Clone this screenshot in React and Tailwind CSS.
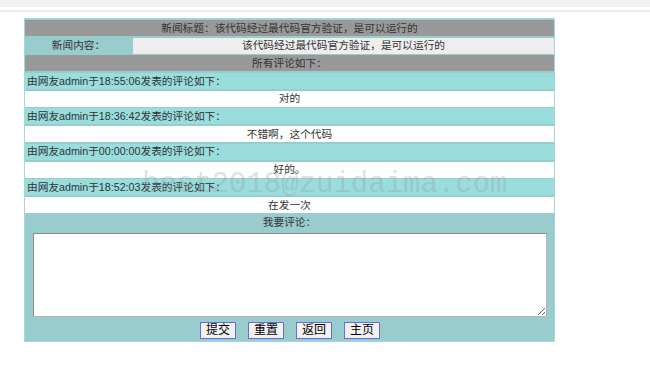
export default function App() {
  const font = { fontFamily: '"Liberation Sans", "Noto Sans CJK SC", sans-serif' };
  const comments = [
    { t: "18:55:06", c: "对的" },
    { t: "18:36:42", c: "不错啊，这个代码" },
    { t: "00:00:00", c: "好的。" },
    { t: "18:52:03", c: "在发一次" },
  ];
  return (
    <div className="relative w-[650px] h-[384px] bg-white overflow-hidden text-[10.7px] text-[#333]" style={font}>
      <div className="h-[7px] bg-[#f1f1f3]" />
      <div className="h-[3px] bg-white" />
      <div className="h-[2px] bg-[#ededed]" />
      <div className="ml-[24px] mt-[6px] w-[531px] border border-[#a3d8d8] bg-[#99cccc] pt-[1px] pb-[2px] flex flex-col">
        <div className="flex flex-col gap-[1.7px]">
          <div className="h-[16px] bg-[#999999] flex items-center justify-center leading-none">
            新闻标题：该代码经过最代码官方验证，是可以运行的
          </div>
          <div className="h-[16px] flex">
            <div className="w-[107px] flex items-center justify-center leading-none">新闻内容：</div>
            <div className="flex-1 ml-[1px] bg-[#eeeeee] flex items-center justify-center leading-none">
              该代码经过最代码官方验证，是可以运行的
            </div>
          </div>
          <div className="h-[16px] bg-[#999999] flex items-center justify-center leading-none">所有评论如下：</div>
          {comments.map((m) => (
            <div key={m.t} className="contents">
              <div className="h-[16px] bg-[#99dddd] flex items-center pl-[2px] leading-none">
                由网友admin于{m.t}发表的评论如下：
              </div>
              <div className="h-[16px] bg-white flex items-center justify-center leading-none">{m.c}</div>
            </div>
          ))}
          <div className="h-[16px] flex items-center justify-center leading-none">我要评论：</div>
        </div>
        <textarea className="ml-[8px] mt-[2.3px] w-[514px] h-[84px] bg-white border border-[#8a8a8a] border-r-[#b5b5b5] border-b-[#b5b5b5] outline-none" />
        <div className="mt-[5px] h-[17px] flex justify-center gap-[12px] pl-[1px]">
          {["提交", "重置", "返回", "主页"].map((b) => (
            <button
              key={b}
              className="w-[36px] h-[17px] border-[1.5px] border-[#6868f0] bg-[#f2f2f2] text-[12px] text-black leading-none flex items-center justify-center"
              style={font}
            >
              {b}
            </button>
          ))}
        </div>
      </div>
      <div
        className="absolute left-[142px] top-[170px] text-[29px] leading-[29px] text-[rgba(150,150,150,0.3)] pointer-events-none whitespace-nowrap"
        style={{ fontFamily: '"Liberation Mono", monospace' }}
      >
        best2018@zuidaima.com
      </div>
    </div>
  );
}
